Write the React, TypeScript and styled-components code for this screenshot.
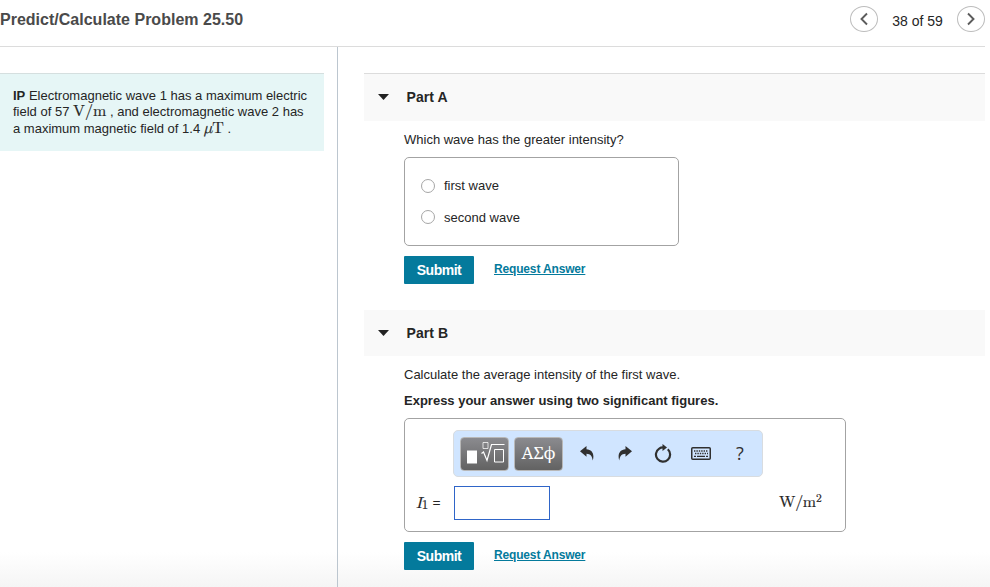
import React from "react";
import styled, { createGlobalStyle } from "styled-components";

const GlobalStyle = createGlobalStyle`
  * { box-sizing: border-box; }
  body { margin: 0; background: linear-gradient(#fff 0, #fff 552px, #f5f5f5 587px) no-repeat; color: #252525; font: 13px/16px "Liberation Sans", Arial, sans-serif; overflow: hidden; }
`;

const Page = styled.div`
  display: flex;
  flex-direction: column;
  width: 985px;
  height: 587px;
`;

const Header = styled.header`
  display: flex;
  justify-content: space-between;
  height: 47px;
  border-bottom: 1px solid #dcdcdc;
`;

const Title = styled.h1`
  margin: 0;
  padding-top: 10px;
  font-size: 16px;
  line-height: 19px;
  letter-spacing: 0.01px;
  color: #4a4a4a;
`;

const Pager = styled.nav`
  display: flex;
  align-items: flex-start;
  padding-top: 6px;
`;

const PageCount = styled.span`
  width: 79px;
  padding-top: 7px;
  text-align: center;
  font-size: 14px;
  line-height: 16px;
`;

const RoundButton = styled.button`
  display: grid;
  place-items: center;
  width: 28px;
  height: 26px;
  padding: 0;
  border: 1px solid #bdbdbd;
  border-radius: 50%;
  background: #fff;
`;

const Columns = styled.main`
  display: flex;
  flex: 1;
  min-height: 0;
`;

const Sidebar = styled.aside`
  width: 338px;
  padding-top: 26px;
  border-right: 1px solid #bcc6cf;
`;

const Statement = styled.div`
  width: 324px;
  height: 78px;
  padding: 14px 0 0 13px;
  border-top: 1px solid #d5dfdf;
  background: #e6f6f6;
  white-space: nowrap;
`;

const Line = styled.div<{ $height: number }>`
  height: ${(p) => p.$height}px;
  line-height: 16px;
`;

const MathText = styled.span`
  font-family: "Latin Modern Math", "Liberation Serif", serif;
  font-size: 16px;
  line-height: 1px;
  -webkit-text-stroke: 0.2px currentColor;
`;

const Work = styled.section`
  flex: 1;
  padding: 26px 0 0 26px;
`;

const PartHeader = styled.div<{ $height: number; $ruled?: boolean }>`
  display: flex;
  align-items: center;
  gap: 17.500px;
  height: ${(p) => p.$height}px;
  padding-left: 14px;
  padding-bottom: ${(p) => (p.$ruled ? 1 : 0)}px;
  border-top: ${(p) => (p.$ruled ? "1px solid #dcdcdc" : "0")};
  background: #f9f9f9;
`;

const PartTitle = styled.h2`
  margin: 0;
  font-size: 14px;
  line-height: 16px;
  letter-spacing: 0.1px;
`;

const PartBody = styled.div<{ $height: number }>`
  height: ${(p) => p.$height}px;
  padding: 11px 0 0 40px;
`;

const Prompt = styled.p<{ $strong?: boolean; $gap: number }>`
  margin: 0 0 ${(p) => p.$gap}px;
  font-weight: ${(p) => (p.$strong ? 700 : 400)};
`;

const Choices = styled.div`
  display: flex;
  flex-direction: column;
  gap: 16px;
  width: 275px;
  height: 89px;
  padding: 20px 0 0 16px;
  border: 1px solid #a3a3a3;
  border-radius: 5px;
`;

const Radio = styled.input`
  appearance: none;
  width: 14px;
  height: 14px;
  margin: 0;
  border: 1px solid #a6a6a6;
  border-radius: 50%;
  background: #fff;
`;

const Choice = styled.label`
  display: flex;
  align-items: center;
  gap: 9px;

  &:last-child ${Radio} {
    margin-bottom: 2px;
  }
`;

const Actions = styled.div`
  display: flex;
  gap: 20px;
  margin-top: 10px;
`;

const SubmitButton = styled.button`
  width: 70px;
  height: 28px;
  padding: 0;
  border: 0;
  border-radius: 1px;
  background: #047a9c;
  color: #fff;
  font: 700 14px/28px "Liberation Sans", Arial, sans-serif;
  letter-spacing: -0.5px;
`;

const RequestLink = styled.a`
  padding-top: 5px;
  color: #047a9c;
  font-size: 12px;
  font-weight: 700;
  line-height: 16px;
  letter-spacing: -0.16px;
  text-decoration: underline;
`;

const AnswerBox = styled.div`
  width: 442px;
  height: 114px;
  padding: 11px 0 0 11px;
  border: 1px solid #a3a3a3;
  border-radius: 5px;
`;

const Toolbar = styled.div`
  display: flex;
  align-items: center;
  width: 310px;
  height: 47px;
  margin-left: 37px;
  padding-left: 6px;
  border: 1px solid #d8dce0;
  border-radius: 5px;
  background: #d0e5ff;
`;

const PaletteButton = styled.button`
  display: grid;
  place-items: center;
  width: 49px;
  height: 34px;
  margin-right: 5px;
  padding: 0 0 1px;
  border: 1px solid #b8b8b8;
  border-radius: 4px;
  background: linear-gradient(#8b8b8f, #626262);
  color: #fff;
  font: 17px/20px "Noto Serif", "DejaVu Serif", "Liberation Serif", serif;
  letter-spacing: -0.2px;
`;

const ToolButton = styled.button`
  display: grid;
  place-items: center;
  width: 38px;
  height: 34px;
  padding: 0;
  border: 0;
  background: none;
  color: #303030;
  font: 18px/20px "Open Sans", sans-serif;
`;

const HelpButton = styled(ToolButton)`
  padding: 0 0 2px 2px;
`;

const AnswerRow = styled.div`
  display: flex;
  align-items: center;
  margin-top: 9px;
`;

const Variable = styled.label`
  display: flex;
  align-items: center;
  width: 38px;
  height: 16px;
  font: 16px/16px "Latin Modern Math", "Liberation Serif", serif;
  -webkit-text-stroke: 0.2px currentColor;
  white-space: nowrap;
`;

const Sub = styled.span`
  padding-top: 5px;
  font-size: 13px;
`;

const Equals = styled.span`
  margin-left: 4.500px;
  font: 13px/16px "Liberation Sans", Arial, sans-serif;
`;

const AnswerInput = styled.input`
  width: 96px;
  height: 34px;
  padding: 0 6px;
  border: 1px solid #2f65c8;
  border-radius: 0;
  background: #fff;
`;

const Unit = styled.span`
  display: flex;
  height: 20px;
  margin-left: 229px;
  font: 16px/18px "Latin Modern Math", "Liberation Serif", serif;
  letter-spacing: -0.3px;
  -webkit-text-stroke: 0.2px currentColor;
`;

const Sup = styled.span`
  font-size: 11.500px;
  line-height: 12px;
`;

const Chevron = ({ left }: { left?: boolean }) => (
  <svg width="8" height="14" viewBox="0 0 8 14" fill="none" stroke="#5c5c5c" strokeWidth="1.900">
    <path d={left ? "M7 1.500 1.500 7 7 12.500" : "M1 1.500 6.500 7 1 12.500"} />
  </svg>
);

const Caret = () => (
  <svg width="11" height="6" viewBox="0 0 11 6" fill="#222">
    <path d="M0 0h11L5.500 6z" />
  </svg>
);

const TemplateIcon = () => (
  <svg width="40" height="24" viewBox="0 0 40 24" fill="none" stroke="#fff">
    <path d="M2 9.500h10v13H2z" fill="#fff" stroke="none" />
    <path d="M18 1.500h5v6h-5z" strokeOpacity=".75" />
    <path d="M16.500 12.500l2-1.500 3.500 8.500 4.500-16h13" strokeWidth="1.200" />
    <path d="M29.500 8.500h9v12.500h-9z" />
  </svg>
);

const UndoIcon = ({ flip }: { flip?: boolean }) => (
  <svg width="14" height="15" viewBox="0 0 14 15" fill="#303030">
    <path
      transform={flip ? "matrix(-1 0 0 1 14 0)" : undefined}
      d="M0 5.300 6.500 0v3.200C12 3.500 14.800 8 12.700 14.500 12.200 10 10.500 8 6.500 7.700v3z"
    />
  </svg>
);

const ResetIcon = () => (
  <svg width="18" height="19" viewBox="0 0 18 19">
    <path d="M13.800 5.300A7.100 7.100 0 1 1 5.200 4.600Q7 3.300 10 3.500" fill="none" stroke="#303030" strokeWidth="2.200" />
    <path d="M8.500 0 13 3.500 8.500 7z" fill="#303030" />
  </svg>
);

const KeyboardIcon = () => (
  <svg width="20" height="13" viewBox="0 0 20 13" fill="none" stroke="#303030">
    <rect x=".75" y=".75" width="18.500" height="11.500" rx="1" strokeWidth="1.500" />
    <path d="M3 4h14M4 6.500h13" strokeWidth="1.500" strokeDasharray="1.400 1" />
    <path d="M3 9.300h2m1 0h8m1 0h2" strokeWidth="1.200" />
  </svg>
);

const SubmitRow = () => (
  <Actions>
    <SubmitButton>Submit</SubmitButton>
    <RequestLink>Request Answer</RequestLink>
  </Actions>
);

export default function App() {
  return (
    <Page>
      <GlobalStyle />
      <Header>
        <Title>Predict/Calculate Problem 25.50</Title>
        <Pager>
          <RoundButton aria-label="Previous"><Chevron left /></RoundButton>
          <PageCount>38 of 59</PageCount>
          <RoundButton aria-label="Next"><Chevron /></RoundButton>
        </Pager>
      </Header>
      <Columns>
        <Sidebar>
          <Statement>
            <Line $height={16}><b>IP</b> Electromagnetic wave 1 has a maximum electric</Line>
            <Line $height={17}>field of 57 <MathText>V/m</MathText> , and electromagnetic wave 2 has</Line>
            <Line $height={17}>a maximum magnetic field of 1.4 <MathText><i>μ</i>T</MathText> .</Line>
          </Statement>
        </Sidebar>
        <Work>
          <PartHeader $height={48} $ruled>
            <Caret />
            <PartTitle>Part A</PartTitle>
          </PartHeader>
          <PartBody $height={189}>
            <Prompt $gap={9}>Which wave has the greater intensity?</Prompt>
            <Choices>
              <Choice><Radio type="radio" name="wave" />first wave</Choice>
              <Choice><Radio type="radio" name="wave" />second wave</Choice>
            </Choices>
            <SubmitRow />
          </PartBody>
          <PartHeader $height={46}>
            <Caret />
            <PartTitle>Part B</PartTitle>
          </PartHeader>
          <PartBody $height={231}>
            <Prompt $gap={10}>Calculate the average intensity of the first wave.</Prompt>
            <Prompt $gap={9} $strong>Express your answer using two significant figures.</Prompt>
            <AnswerBox>
              <Toolbar>
                <PaletteButton aria-label="Templates"><TemplateIcon /></PaletteButton>
                <PaletteButton>ΑΣϕ</PaletteButton>
                <ToolButton aria-label="Undo"><UndoIcon /></ToolButton>
                <ToolButton aria-label="Redo"><UndoIcon flip /></ToolButton>
                <ToolButton aria-label="Reset"><ResetIcon /></ToolButton>
                <ToolButton aria-label="Keyboard"><KeyboardIcon /></ToolButton>
                <HelpButton>?</HelpButton>
              </Toolbar>
              <AnswerRow>
                <Variable><i>I</i><Sub>1</Sub><Equals>=</Equals></Variable>
                <AnswerInput aria-label="Intensity" />
                <Unit>W/m<Sup>2</Sup></Unit>
              </AnswerRow>
            </AnswerBox>
            <SubmitRow />
          </PartBody>
        </Work>
      </Columns>
    </Page>
  );
}
